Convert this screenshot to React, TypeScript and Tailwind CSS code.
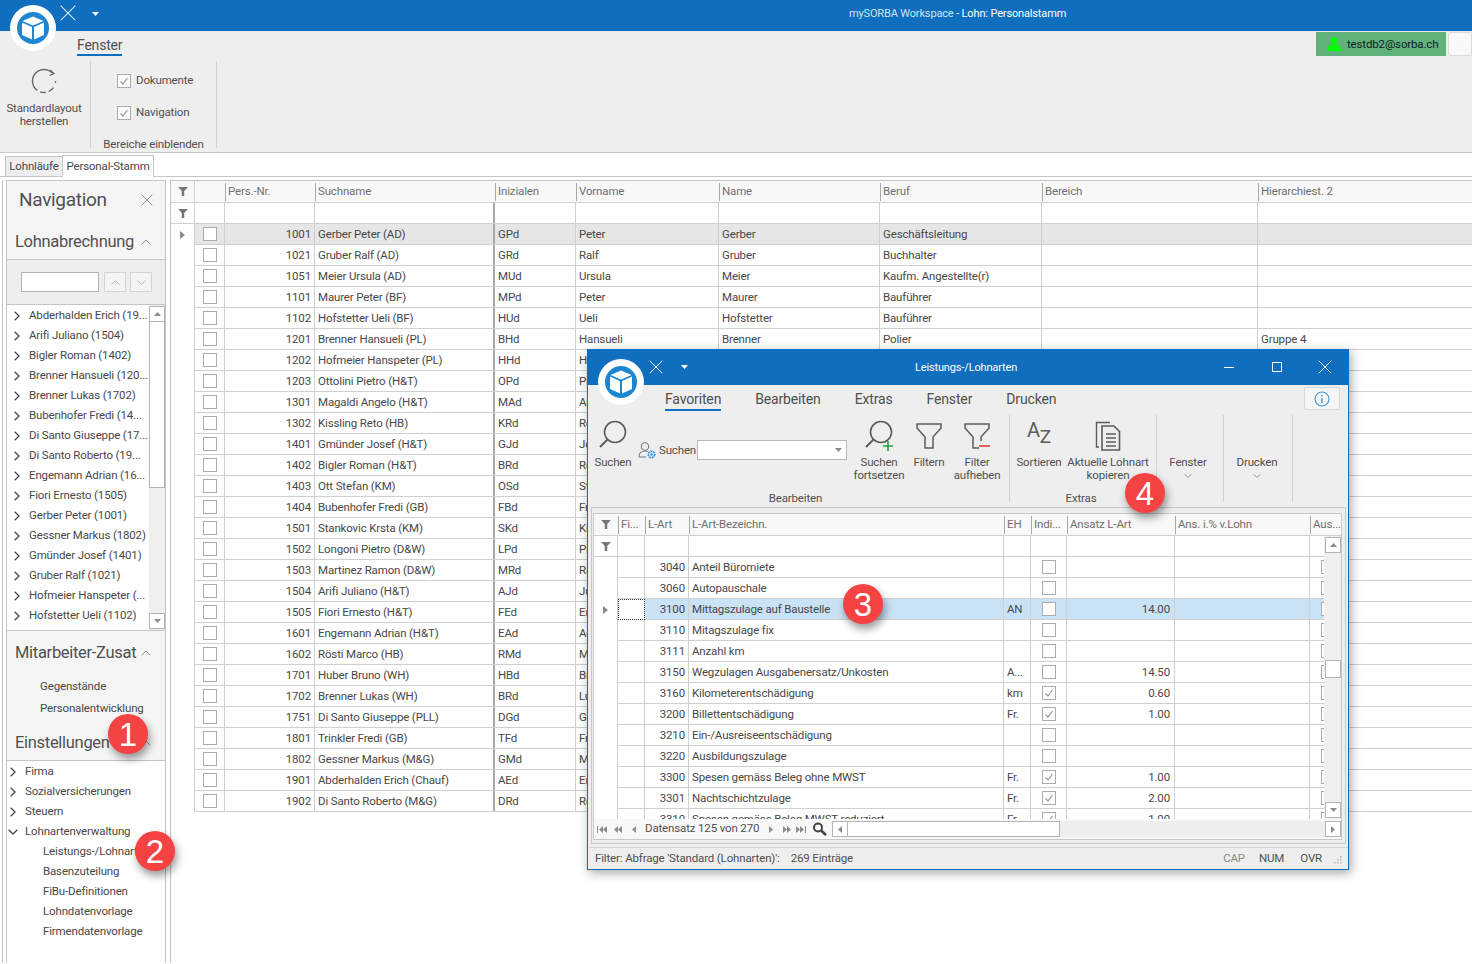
import { ChevronDown, ChevronUp, X } from "lucide-react";
import type { ReactNode } from "react";

const people = [
  ["1001", "Gerber Peter (AD)", "GPd", "Peter", "Gerber", "Geschäftsleitung", ""],
  ["1021", "Gruber Ralf (AD)", "GRd", "Ralf", "Gruber", "Buchhalter", ""],
  ["1051", "Meier Ursula (AD)", "MUd", "Ursula", "Meier", "Kaufm. Angestellte(r)", ""],
  ["1101", "Maurer Peter (BF)", "MPd", "Peter", "Maurer", "Bauführer", ""],
  ["1102", "Hofstetter Ueli (BF)", "HUd", "Ueli", "Hofstetter", "Bauführer", ""],
  ["1201", "Brenner Hansueli (PL)", "BHd", "Hansueli", "Brenner", "Polier", "Gruppe 4"],
  ["1202", "Hofmeier Hanspeter (PL)", "HHd", "Hanspeter"],
  ["1203", "Ottolini Pietro (H&T)", "OPd", "Pietro"],
  ["1301", "Magaldi Angelo (H&T)", "MAd", "Angelo"],
  ["1302", "Kissling Reto (HB)", "KRd", "Reto"],
  ["1401", "Gmünder Josef (H&T)", "GJd", "Josef"],
  ["1402", "Bigler Roman (H&T)", "BRd", "Roman"],
  ["1403", "Ott Stefan (KM)", "OSd", "Stefan"],
  ["1404", "Bubenhofer Fredi (GB)", "FBd", "Fredi"],
  ["1501", "Stankovic Krsta (KM)", "SKd", "Krsta"],
  ["1502", "Longoni Pietro (D&W)", "LPd", "Pietro"],
  ["1503", "Martinez Ramon (D&W)", "MRd", "Ramon"],
  ["1504", "Arifi Juliano (H&T)", "AJd", "Juliano"],
  ["1505", "Fiori Ernesto (H&T)", "FEd", "Ernesto"],
  ["1601", "Engemann Adrian (H&T)", "EAd", "Adrian"],
  ["1602", "Rösti Marco (HB)", "RMd", "Marco"],
  ["1701", "Huber Bruno (WH)", "HBd", "Bruno"],
  ["1702", "Brenner Lukas (WH)", "BRd", "Lukas"],
  ["1751", "Di Santo Giuseppe (PLL)", "DGd", "Giuseppe"],
  ["1801", "Trinkler Fredi (GB)", "TFd", "Fredi"],
  ["1802", "Gessner Markus (M&G)", "GMd", "Markus"],
  ["1901", "Abderhalden Erich (Chauf)", "AEd", "Erich"],
  ["1902", "Di Santo Roberto (M&G)", "DRd", "Roberto"],
];

const navPeople = [
  "Abderhalden Erich (19...",
  "Arifi Juliano (1504)",
  "Bigler Roman (1402)",
  "Brenner Hansueli (120...",
  "Brenner Lukas (1702)",
  "Bubenhofer Fredi (14...",
  "Di Santo Giuseppe (17...",
  "Di Santo Roberto (19...",
  "Engemann Adrian (16...",
  "Fiori Ernesto (1505)",
  "Gerber Peter (1001)",
  "Gessner Markus (1802)",
  "Gmünder Josef (1401)",
  "Gruber Ralf (1021)",
  "Hofmeier Hanspeter (...",
  "Hofstetter Ueli (1102)",
];

const lohnarten: [string, string, string, boolean, string][] = [
  ["3040", "Anteil Büromiete", "", false, ""],
  ["3060", "Autopauschale", "", false, ""],
  ["3100", "Mittagszulage auf Baustelle", "AN", false, "14.00"],
  ["3110", "Mitagszulage fix", "", false, ""],
  ["3111", "Anzahl km", "", false, ""],
  ["3150", "Wegzulagen Ausgabenersatz/Unkosten", "A...", false, "14.50"],
  ["3160", "Kilometerentschädigung", "km", true, "0.60"],
  ["3200", "Billettentschädigung", "Fr.", true, "1.00"],
  ["3210", "Ein-/Ausreiseentschädigung", "", false, ""],
  ["3220", "Ausbildungszulage", "", false, ""],
  ["3300", "Spesen gemäss Beleg ohne MWST", "Fr.", true, "1.00"],
  ["3301", "Nachtschichtzulage", "Fr.", true, "2.00"],
  ["3310", "Spesen gemäss Beleg MWST reduziert", "Fr.", true, "1.00"],
];

function Logo() {
  return (
    <div className="w-[46px] h-[46px] rounded-full bg-white flex items-center justify-center">
      <svg width="32" height="32" viewBox="0 0 32 32">
        <circle cx="16" cy="16" r="16" fill="#1d86d1" />
        <path d="M16 4.5 L26.5 9 L16 13.5 L5.5 9 Z" fill="#fff" />
        <path d="M5 10.5 L15 15 L15 27.5 L5 23 Z" fill="#fff" />
        <path d="M27 10.5 L17 15 L17 27.5 L27 23 Z" fill="#fff" />
      </svg>
    </div>
  );
}

function Funnel() {
  return (
    <svg width="10" height="9" viewBox="0 0 12 11">
      <path d="M0 0 H12 L7.5 5 V11 H4.5 V5 Z" fill="#757575" />
    </svg>
  );
}

function RowArrow() {
  return (
    <svg width="5" height="8" viewBox="0 0 5 8">
      <path d="M0 0 L5 4 L0 8 Z" fill="#8a8a8a" />
    </svg>
  );
}

function TreeArrow({ open = false }: { open?: boolean }) {
  return open ? (
    <svg width="10" height="6" viewBox="0 0 10 6" className="shrink-0">
      <path d="M0.7 0.7 L5 5 L9.3 0.7" fill="none" stroke="#444" strokeWidth="1.3" />
    </svg>
  ) : (
    <svg width="6" height="10" viewBox="0 0 6 10" className="shrink-0">
      <path d="M0.7 0.7 L5 5 L0.7 9.3" fill="none" stroke="#444" strokeWidth="1.3" />
    </svg>
  );
}

function Check({ checked = false }: { checked?: boolean }) {
  return (
    <div className="w-[14px] h-[14px] border border-[#ababab] bg-white flex items-center justify-center shrink-0">
      {checked && (
        <svg width="10" height="10" viewBox="0 0 10 10">
          <path d="M1.5 5.5 L4 8 L8.5 2" fill="none" stroke="#9a9a9a" strokeWidth="1.2" />
        </svg>
      )}
    </div>
  );
}

function Magnifier({ plus = false }: { plus?: boolean }) {
  return (
    <svg width="32" height="32" viewBox="0 0 32 32">
      <circle cx="18" cy="12" r="10.5" fill="none" stroke="#5c5c5c" strokeWidth="1.6" />
      <path d="M10.5 19.5 L3 27" fill="none" stroke="#5c5c5c" strokeWidth="2" />
      {plus && <path d="M25 21 V31 M20 26 H30" fill="none" stroke="#2f9e44" strokeWidth="1.6" />}
    </svg>
  );
}

function FilterIcon({ clear = false }: { clear?: boolean }) {
  return (
    <svg width="28" height="28" viewBox="0 0 28 28">
      <path
        d="M2 2 H26 V6 L18 15 V26 H10 V15 L2 6 Z"
        fill="none"
        stroke="#5c5c5c"
        strokeWidth="1.5"
        strokeDasharray={clear ? "44 9 40" : undefined}
      />
      {clear && <path d="M16 24 H27" stroke="#e23b3b" strokeWidth="1.6" />}
    </svg>
  );
}

function CopyIcon() {
  return (
    <svg width="26" height="30" viewBox="0 0 26 30">
      <path d="M4 26 H1.5 V1.5 H15" fill="none" stroke="#5c5c5c" strokeWidth="1.4" />
      <path d="M7 29 V5 H19 L24.5 10.5 V29 Z" fill="none" stroke="#5c5c5c" strokeWidth="1.6" />
      <path d="M11 13 H21 M11 17 H21 M11 21 H21 M11 25 H21" stroke="#5c5c5c" strokeWidth="1.4" />
    </svg>
  );
}

function UserGear() {
  return (
    <svg width="18" height="18" viewBox="0 0 18 18">
      <circle cx="7" cy="5.5" r="3.7" fill="none" stroke="#7a7a7a" strokeWidth="1.1" />
      <path d="M1 16 C1 11.5 4 10 7 10 C8 10 9 10.2 9.8 10.6 M1 16 H8" fill="none" stroke="#7a7a7a" strokeWidth="1.1" />
      <circle cx="13.5" cy="13.5" r="3.2" fill="none" stroke="#2b8fdc" strokeWidth="1.6" strokeDasharray="2 0.7" />
      <circle cx="13.5" cy="13.5" r="1.2" fill="#2b8fdc" />
    </svg>
  );
}

function Badge({ n, className }: { n: number; className: string }) {
  return (
    <div
      className={`absolute w-10 h-10 rounded-full bg-[#f54242] text-white text-[33px] tracking-normal leading-none flex items-center justify-center shadow-[2px_5px_8px_rgba(0,0,0,0.4)] font-['Liberation_Sans',sans-serif] ${className}`}
    >
      {n}
    </div>
  );
}

function ScrollBtn({ dir }: { dir: "up" | "down" | "left" | "right" }) {
  const d = {
    up: "M0 4 L3.5 0 L7 4 Z",
    down: "M0 0 L7 0 L3.5 4 Z",
    left: "M4 0 L4 7 L0 3.5 Z",
    right: "M0 0 L4 3.5 L0 7 Z",
  }[dir];
  return (
    <div className="w-[16px] h-[16px] bg-white border border-[#b4b4b4] flex items-center justify-center shrink-0">
      <svg width={dir === "up" || dir === "down" ? 7 : 4} height={dir === "up" || dir === "down" ? 4 : 7}>
        <path d={d} fill="#8c8c8c" />
      </svg>
    </div>
  );
}

function Pager({ d, w, className = "" }: { d: string; w: number; className?: string }) {
  return (
    <svg width={w} height="7" className={`shrink-0 ${className}`}>
      <path d={d} fill="#8c8c8c" />
    </svg>
  );
}

function HeadCell({ children }: { children?: ReactNode }) {
  return (
    <div className="h-[18px] self-center border-l border-[#a8a8a8] pl-[2px] leading-[16px] text-[#707070] whitespace-nowrap overflow-hidden">
      {children}
    </div>
  );
}

function NavHeading({ children, className = "" }: { children: ReactNode; className?: string }) {
  return (
    <div className={`flex items-center justify-between pl-[8px] pr-[11px] text-[16.5px] tracking-[-0.3px] text-[#505050] whitespace-nowrap ${className}`}>
      <span>{children}</span>
      <ChevronUp size={16} strokeWidth={1.2} className="text-[#777] shrink-0" />
    </div>
  );
}

function TreeRow({ label, open = false, indent = false }: { label: string; open?: boolean; indent?: boolean }) {
  return (
    <div className="h-[20px] flex items-center whitespace-nowrap">
      {indent ? (
        <span className="pl-[35px]">{label}</span>
      ) : open ? (
        <>
          <TreeArrow open />
          <span className="ml-[7px]">{label}</span>
        </>
      ) : (
        <>
          <span className="w-[10px] flex justify-center shrink-0">
            <TreeArrow />
          </span>
          <span className="ml-[7px]">{label}</span>
        </>
      )}
    </div>
  );
}

function RibbonBtn({ label, icon, w, chevron }: { label: ReactNode; icon?: ReactNode; w: string; chevron?: boolean }) {
  return (
    <div className={`${w} shrink-0 flex flex-col items-center text-center leading-[13px]`}>
      <div className="h-[41px] flex items-center justify-center">{icon}</div>
      <div className="whitespace-nowrap">{label}</div>
      {chevron && <ChevronDown size={12} strokeWidth={1.5} className="mt-[1px] text-[#777]" />}
    </div>
  );
}

function RibbonSep({ className = "" }: { className?: string }) {
  return <div className={`w-px self-stretch bg-[#d2d2d2] shrink-0 ${className}`} />;
}

function PersonalGrid() {
  const cols = "grid grid-cols-[24px_30px_90px_180px_81px_143px_161px_162px_216px_214px]";
  return (
    <div className="flex-1 min-w-0 border-l border-t border-[#c4c4c4] ml-[4px] overflow-hidden">
      <div className={`${cols} h-[22px] bg-[#f8f8f8] border-b border-[#d0d0d0]`}>
        <div className="flex items-center justify-center border-r border-[#d0d0d0]">
          <Funnel />
        </div>
        <div />
        <HeadCell>Pers.-Nr.</HeadCell>
        <HeadCell>Suchname</HeadCell>
        <HeadCell>Inizialen</HeadCell>
        <HeadCell>Vorname</HeadCell>
        <HeadCell>Name</HeadCell>
        <HeadCell>Beruf</HeadCell>
        <HeadCell>Bereich</HeadCell>
        <HeadCell>Hierarchiest. 2</HeadCell>
      </div>
      <div className={`${cols} h-[21px] border-b border-[#d0d0d0]`}>
        <div className="flex items-center justify-center border-r border-[#d0d0d0]">
          <Funnel />
        </div>
        <div className="border-r border-[#d0d0d0]" />
        <div className="border-r border-[#d0d0d0]" />
        <div className="border-r-2 border-[#a8a8a8]" />
        <div className="border-r border-[#d0d0d0]" />
        <div className="border-r border-[#d0d0d0]" />
        <div className="border-r border-[#d0d0d0]" />
        <div className="border-r border-[#d0d0d0]" />
        <div className="border-r border-[#d0d0d0]" />
      </div>
      {people.map((p, i) => (
        <div key={p[0]} className={`${cols} h-[21px] leading-[20px]`}>
          <div className="flex items-center justify-center border-r border-[#d0d0d0]">{i === 0 && <RowArrow />}</div>
          <div className={`col-span-9 grid grid-cols-[30px_90px_180px_81px_143px_161px_162px_216px_214px] border-b border-[#d0d0d0] ${i === 0 ? "bg-[#e6e6e6]" : ""}`}>
            <div className="flex items-center justify-center border-r border-[#d0d0d0]">
              <Check />
            </div>
            <div className="text-right pr-[3px] border-r border-[#d0d0d0]">{p[0]}</div>
            <div className="pl-[3px] border-r-2 border-[#a8a8a8] whitespace-nowrap">{p[1]}</div>
            <div className="pl-[3px] border-r border-[#d0d0d0]">{p[2]}</div>
            <div className="pl-[3px] border-r border-[#d0d0d0]">{p[3]}</div>
            <div className="pl-[3px] border-r border-[#d0d0d0]">{p[4]}</div>
            <div className="pl-[3px] border-r border-[#d0d0d0]">{p[5]}</div>
            <div className="border-r border-[#d0d0d0]" />
            <div className="pl-[3px]">{p[6]}</div>
          </div>
        </div>
      ))}
    </div>
  );
}

function LohnartenWindow() {
  const cols = "grid grid-cols-[24px_27px_44px_315px_27px_36px_108px_135px_36px]";
  return (
    <div className="absolute left-[587px] top-[349px] w-[762px] h-[521px] bg-[#eeeeee] border border-[#106ebe] border-t-0 shadow-[2px_3px_10px_rgba(0,0,0,0.35)] flex flex-col">
      <div className="h-[36px] bg-[#106ebe] shrink-0 flex items-center text-white relative -mx-px">
        <X size={24} strokeWidth={1} className="ml-[57px]" />
        <svg width="7" height="4" className="ml-[13px]">
          <path d="M0 0 H7 L3.5 4 Z" fill="#fff" />
        </svg>
        <div className="ml-[227px] mt-[2px] w-[120px] text-[11px] whitespace-nowrap">Leistungs-/Lohnarten</div>
        <div className="ml-auto flex items-center mr-[12px]">
          <div className="w-[10px] h-px bg-white" />
          <div className="w-[10px] h-[10px] border border-white ml-[38px]" />
          <X size={24} strokeWidth={1} className="ml-[31px]" />
        </div>
      </div>
      <div className="h-[30px] shrink-0 flex items-start pl-[77px] text-[14px] tracking-[-0.15px] gap-[34px] pt-[5px] text-[#505050] relative">
        <span className="border-b-2 border-[#106ebe] leading-[19px] h-[21px]">Favoriten</span>
        <span className="leading-[19px]">Bearbeiten</span>
        <span className="leading-[19px]">Extras</span>
        <span className="leading-[19px]">Fenster</span>
        <span className="leading-[19px]">Drucken</span>
        <div className="absolute right-[8px] top-[2px] w-[36px] h-[23px] bg-[#f6f6f6] border border-[#d8d8d8] rounded-[2px] flex items-center justify-center">
          <svg width="16" height="16" viewBox="0 0 16 16">
            <circle cx="8" cy="8" r="7" fill="none" stroke="#3d9ae0" strokeWidth="1.2" />
            <path d="M8 7 V12 M8 4 V5.4" stroke="#3d9ae0" strokeWidth="1.4" />
          </svg>
        </div>
      </div>
      <div className="h-[87px] shrink-0 flex text-[#505050]">
        <div className="w-[421px] shrink-0 flex flex-col">
          <div className="flex flex-1">
            <RibbonBtn w="w-[50px]" label="Suchen" icon={<Magnifier />} />
            <div className="w-[217px] shrink-0 flex items-start pt-[25px]">
              <div className="mt-[1px]">
                <UserGear />
              </div>
              <span className="ml-[3px] w-[38px] leading-[20px]">Suchen</span>
              <div className="w-[150px] h-[20px] bg-white border border-[#b8b8b8] flex items-center justify-end pr-[4px]">
                <svg width="7" height="4">
                  <path d="M0 0 H7 L3.5 4 Z" fill="#8c8c8c" />
                </svg>
              </div>
            </div>
            <RibbonBtn w="w-[48px]" label={<>Suchen<br />fortsetzen</>} icon={<Magnifier plus />} />
            <RibbonBtn w="w-[52px]" label="Filtern" icon={<FilterIcon />} />
            <RibbonBtn w="w-[44px]" label={<>Filter<br />aufheben</>} icon={<FilterIcon clear />} />
          </div>
          <div className="text-center pr-[6px] leading-[13px] -mb-[3px]">Bearbeiten</div>
        </div>
        <RibbonSep />
        <div className="w-[146px] shrink-0 flex flex-col">
          <div className="flex flex-1">
            <RibbonBtn
              w="w-[58px]"
              label="Sortieren"
              icon={
                <div className="flex items-end text-[#5c5c5c] leading-none">
                  <span className="text-[20px] -mt-[6px] mb-[6px]">A</span>
                  <span className="text-[19px]">Z</span>
                </div>
              }
            />
            <RibbonBtn w="w-[80px]" label={<>Aktuelle Lohnart<br />kopieren</>} icon={<CopyIcon />} />
          </div>
          <div className="text-center pr-[4px] leading-[13px] -mb-[3px]">Extras</div>
        </div>
        <RibbonSep />
        <RibbonBtn w="w-[66px] pr-[4px]" label="Fenster" chevron />
        <RibbonSep />
        <RibbonBtn w="w-[68px] pr-[2px]" label="Drucken" chevron />
        <RibbonSep />
      </div>
      <div className="ml-[3px] mr-[2px] mt-[5px] h-[337px] border border-[#c8c8c8] pt-[5px] pl-[1px] pr-[3px] pb-[2px] shrink-0">
        <div className="h-[327px] border border-[#c8c8c8] bg-white flex flex-col overflow-hidden">
          <div className={`${cols} h-[22px] bg-[#f8f8f8] border-b border-[#d0d0d0] shrink-0`}>
            <div className="flex items-center justify-center">
              <Funnel />
            </div>
            <HeadCell>Fi...</HeadCell>
            <HeadCell>L-Art</HeadCell>
            <HeadCell>L-Art-Bezeichn.</HeadCell>
            <HeadCell>EH</HeadCell>
            <HeadCell>Indi...</HeadCell>
            <HeadCell>Ansatz L-Art</HeadCell>
            <HeadCell>Ans. i.% v.Lohn</HeadCell>
            <HeadCell>Aus...</HeadCell>
          </div>
          <div className="flex h-[283px] shrink-0">
            <div className="w-[730px] overflow-hidden shrink-0">
              <div className={`${cols} h-[21px] border-b border-[#d0d0d0]`}>
                <div className="flex items-center justify-center border-r border-[#d0d0d0]">
                  <Funnel />
                </div>
                <div className="border-r border-[#d0d0d0]" />
                <div className="border-r border-[#d0d0d0]" />
                <div className="border-r border-[#d0d0d0]" />
                <div className="border-r border-[#d0d0d0]" />
                <div className="border-r border-[#d0d0d0]" />
                <div className="border-r border-[#d0d0d0]" />
                <div className="border-r border-[#d0d0d0]" />
              </div>
              {lohnarten.map((r) => {
                const selected = r[0] === "3100";
                return (
                  <div key={r[0]} className={`${cols} h-[21px] leading-[20px]`}>
                    <div className="flex items-center justify-center border-r border-[#d0d0d0]">{selected && <RowArrow />}</div>
                    <div className={selected ? "border border-dotted border-[#333]" : "border-r border-b border-[#d0d0d0]"} />
                    <div className={`col-span-7 grid grid-cols-[44px_315px_27px_36px_108px_135px_36px] border-b border-[#d0d0d0] ${selected ? "bg-[#c9e2f5]" : ""}`}>
                      <div className="text-right pr-[3px] border-r border-[#d0d0d0]">{r[0]}</div>
                      <div className="pl-[3px] border-r border-[#d0d0d0] whitespace-nowrap">{r[1]}</div>
                      <div className="pl-[3px] border-r border-[#d0d0d0]">{r[2]}</div>
                      <div className="flex items-center justify-center border-r border-[#d0d0d0]">
                        <Check checked={r[3]} />
                      </div>
                      <div className="text-right pr-[4px] border-r border-[#d0d0d0]">{r[4]}</div>
                      <div className="border-r border-[#d0d0d0]" />
                      <div className="flex items-center justify-center">
                        <Check />
                      </div>
                    </div>
                  </div>
                );
              })}
            </div>
            <div className="w-[17px] shrink-0 bg-[#efefef] flex flex-col pt-px pb-px pl-px">
              <ScrollBtn dir="up" />
              <div className="w-[16px] h-[18px] bg-white border border-[#b4b4b4] mt-[107px] shrink-0" />
              <div className="flex-1" />
              <ScrollBtn dir="down" />
            </div>
          </div>
          <div className="h-[20px] shrink-0 flex items-center bg-[#f8f8f8] text-[#505050]">
            <div className="w-[238px] shrink-0 flex items-center pl-[3px]">
              <Pager w={10} d="M0 0 h1 v7 h-1 z M6 0 v7 L2 3.5 Z M10 0 v7 L6 3.5 Z" />
              <Pager w={8} className="ml-[7px]" d="M4 0 v7 L0 3.5 Z M8 0 v7 L4 3.5 Z" />
              <Pager w={4} className="ml-[10px]" d="M4 0 v7 L0 3.5 Z" />
              <span className="whitespace-nowrap w-[124px] ml-[9px]">Datensatz 125 von 270</span>
              <Pager w={4} d="M0 0 L4 3.5 L0 7 Z" />
              <Pager w={8} className="ml-[10px]" d="M0 0 L4 3.5 L0 7 Z M4 0 L8 3.5 L4 7 Z" />
              <Pager w={10} className="ml-[5px]" d="M0 0 L4 3.5 L0 7 Z M4 0 L8 3.5 L4 7 Z M9 0 h1 v7 h-1 z" />
              <svg width="15" height="14" viewBox="0 0 15 14" className="ml-[6px] shrink-0">
                <circle cx="6" cy="5.5" r="4" fill="none" stroke="#444" strokeWidth="2" />
                <path d="M9 8.5 L14 13" stroke="#444" strokeWidth="2.6" />
              </svg>
            </div>
            <div className="flex-1 h-[16px] flex bg-[#eeeeee]">
              <ScrollBtn dir="left" />
              <div className="w-[212px] bg-white border border-[#b4b4b4] border-l-0" />
              <div className="flex-1" />
              <ScrollBtn dir="right" />
            </div>
          </div>
        </div>
      </div>
      <div className="flex-1 flex items-center pl-[7px] pr-[6px] text-[#505050] border-t border-[#d4d4d4] mt-[3px]">
        <span>Filter: Abfrage 'Standard (Lohnarten)':</span>
        <span className="ml-[11px]">269 Einträge</span>
        <span className="ml-auto text-[#8a8a8a]">CAP</span>
        <span className="ml-[14px]">NUM</span>
        <span className="ml-[16px]">OVR</span>
        <svg width="10" height="10" className="ml-[10px] mt-[3px]">
          <path d="M8 1 h1.5 v1.5 h-1.5 z M5 4 h1.5 v1.5 h-1.5 z M8 4 h1.5 v1.5 h-1.5 z M2 7 h1.5 v1.5 h-1.5 z M5 7 h1.5 v1.5 h-1.5 z M8 7 h1.5 v1.5 h-1.5 z" fill="#b0b0b0" />
        </svg>
      </div>
    </div>
  );
}

export default function App() {
  return (
    <div className="relative w-[1472px] h-[964px] overflow-hidden bg-white text-[11.5px] tracking-[-0.15px] text-[#484848] font-['Roboto',sans-serif]">
      <div className="h-[31px] bg-[#106ebe] flex items-center text-white">
        <X size={28} strokeWidth={0.9} className="ml-[54px] -mt-[6px]" />
        <svg width="7" height="4" className="ml-[10px] -mt-[3px]">
          <path d="M0 0 H7 L3.5 4 Z" fill="#fff" />
        </svg>
        <div className="ml-[750px] text-[11px] whitespace-nowrap -mt-[2px]">
          <span className="text-[#cfe3f5]">mySORBA Workspace</span> - Lohn: Personalstamm
        </div>
      </div>
      <div className="h-[122px] bg-[#eeeeee] border-b border-[#c8c8c8]">
        <div className="h-[30px] flex items-start justify-between">
          <span className="ml-[77px] mt-[6px] h-[19px] text-[14px] tracking-[-0.2px] leading-[17px] border-b-2 border-[#106ebe] text-[#505050]">Fenster</span>
          <div className="flex mt-px">
            <div className="w-[130px] h-[24px] bg-[#61b17b] flex items-center pl-[10px] text-[#10202a]">
              <svg width="16" height="16" viewBox="0 0 16 16">
                <circle cx="8" cy="4.5" r="3.5" fill="#00ff00" />
                <path d="M1 15 C1 10 4 8.5 8 8.5 C12 8.5 15 10 15 15 Z" fill="#00ff00" />
              </svg>
              <span className="ml-[5px] mt-px">testdb2@sorba.ch</span>
            </div>
            <div className="w-[24px] h-[24px] ml-[2px] bg-[#f8f8f8] border border-[#dcdcdc] rounded-l-[2px]" />
          </div>
        </div>
        <div className="h-[87px] flex text-[#505050]">
          <div className="w-[90px] flex flex-col items-center text-center leading-[13px] pr-[2px]">
            <svg width="28" height="28" viewBox="0 0 28 28" className="mt-[6px]">
              <circle cx="14" cy="14" r="11.5" fill="none" stroke="#6a6a6a" strokeWidth="1.4" strokeDasharray="2 5 6 3 6 3 38 9" />
              <path d="M20 3 L24 6.5 L19.5 8.5" fill="none" stroke="#6a6a6a" strokeWidth="1.3" />
            </svg>
            <span className="mt-[7px] whitespace-nowrap">Standardlayout</span>
            <span>herstellen</span>
          </div>
          <RibbonSep />
          <div className="w-[125px] flex flex-col">
            <div className="flex items-center pl-[26px] mt-[11px] gap-[5px]">
              <Check checked />
              <span>Dokumente</span>
            </div>
            <div className="flex items-center pl-[26px] mt-[15px] gap-[5px]">
              <Check checked />
              <span>Navigation</span>
            </div>
            <span className="mt-auto text-center leading-[13px] whitespace-nowrap -mb-[3px]">Bereiche einblenden</span>
          </div>
          <RibbonSep />
        </div>
      </div>
      <div className="h-[24px] pt-[2px] border-b border-[#c4c4c4] flex items-end pl-[5px]">
        <div className="h-[20px] w-[58px] bg-[#eeeeee] border border-b-0 border-[#c4c4c4] flex items-center justify-center">Lohnläufe</div>
        <div className="h-[22px] w-[92px] bg-white border border-b-0 border-[#c4c4c4] -ml-px flex items-center justify-center relative top-px">Personal-Stamm</div>
      </div>
      <div className="flex h-[786px] pt-[3px] pl-[2px]">
        <div className="w-[164px] shrink-0 border-l border-[#c4c4c4] pl-[3px] flex">
          <div className="flex-1 min-w-0 bg-[#f5f5f5] border-x border-t border-[#c4c4c4] flex flex-col">
            <div className="flex items-center justify-between pl-[12px] pr-[8px] h-[36px] mt-px text-[19px] tracking-[-0.3px] text-[#505050]">
              <span>Navigation</span>
              <X size={20} strokeWidth={1} className="text-[#777]" />
            </div>
            <NavHeading className="h-[22px] mt-[13px]">Lohnabrechnung</NavHeading>
            <div className="mt-[6px] h-[372px] border-y border-[#c4c4c4] flex flex-col shrink-0">
              <div className="h-[45px] bg-[#eeeeee] flex items-center pl-[14px] border-b border-[#c4c4c4] shrink-0">
                <div className="w-[78px] h-[20px] bg-white border border-[#b4b4b4]" />
                <div className="w-[22px] h-[20px] ml-[5px] border border-[#d4d4d4] bg-[#f4f4f4] flex items-center justify-center">
                  <ChevronUp size={15} strokeWidth={1.3} className="text-[#aaa]" />
                </div>
                <div className="w-[22px] h-[20px] ml-[4px] border border-[#d4d4d4] bg-[#f4f4f4] flex items-center justify-center">
                  <ChevronDown size={15} strokeWidth={1.3} className="text-[#aaa]" />
                </div>
              </div>
              <div className="flex-1 bg-white flex min-h-0">
                <div className="flex-1 min-w-0 pl-[7px] pt-px overflow-hidden">
                  {navPeople.map((n) => (
                    <div key={n} className="h-[20px] flex items-center whitespace-nowrap">
                      <TreeArrow />
                      <span className="ml-[9px]">{n}</span>
                    </div>
                  ))}
                </div>
                <div className="w-[16px] shrink-0 bg-[#efefef] flex flex-col pt-px pb-px">
                  <ScrollBtn dir="up" />
                  <div className="w-[16px] h-[166px] bg-white border border-[#b4b4b4] border-t-0" />
                  <div className="flex-1" />
                  <ScrollBtn dir="down" />
                </div>
              </div>
            </div>
            <NavHeading className="h-[22px] mt-[11px]">Mitarbeiter-Zusat</NavHeading>
            <div className="pl-[33px] mt-[11px] leading-[22px]">
              <div>Gegenstände</div>
              <div>Personalentwicklung</div>
            </div>
            <NavHeading className="h-[22px] mt-[13px]">Einstellungen</NavHeading>
            <div className="mt-[6px] flex-1 bg-white border-t border-[#c4c4c4] pl-[1px] pt-px">
              <TreeRow label="Firma" />
              <TreeRow label="Sozialversicherungen" />
              <TreeRow label="Steuern" />
              <TreeRow label="Lohnartenverwaltung" open />
              <TreeRow label="Leistungs-/Lohnarten" indent />
              <TreeRow label="Basenzuteilung" indent />
              <TreeRow label="FiBu-Definitionen" indent />
              <TreeRow label="Lohndatenvorlage" indent />
              <TreeRow label="Firmendatenvorlage" indent />
            </div>
          </div>
        </div>
        <PersonalGrid />
      </div>
      <div className="absolute left-[10px] top-[5px]">
        <Logo />
      </div>
      <LohnartenWindow />
      <div className="absolute left-[598px] top-[359px]">
        <Logo />
      </div>
      <Badge n={1} className="left-[108px] top-[714px]" />
      <Badge n={2} className="left-[135px] top-[831px]" />
      <Badge n={3} className="left-[843px] top-[584px]" />
      <Badge n={4} className="left-[1125px] top-[473px]" />
    </div>
  );
}
